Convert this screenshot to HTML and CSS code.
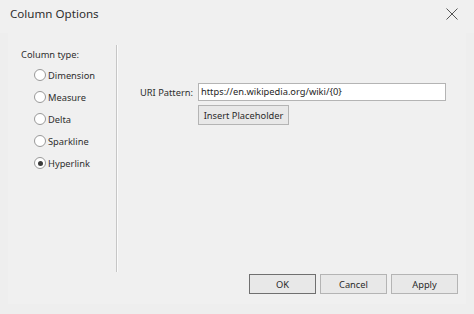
FILE: index.html
```html
<!DOCTYPE html>
<html>
<head>
<meta charset="utf-8">
<link rel="stylesheet" href="styles.css">
</head>
<body>
<div class="dialog">
  <div class="titlebar">
    <span class="title">Column Options</span>
    <svg class="close" width="12" height="12" viewBox="0 0 12 12"><path d="M0.5 0.5 L11.5 11.5 M11.5 0.5 L0.5 11.5" stroke="#555" stroke-width="1" fill="none"/></svg>
  </div>
  <div class="panel">
    <div class="main">
      <div class="types">
        <div class="types-label">Column type:</div>
        <div class="radio"><span class="dot"></span><span>Dimension</span></div>
        <div class="radio"><span class="dot"></span><span>Measure</span></div>
        <div class="radio"><span class="dot"></span><span>Delta</span></div>
        <div class="radio"><span class="dot"></span><span>Sparkline</span></div>
        <div class="radio"><span class="dot checked"></span><span>Hyperlink</span></div>
      </div>
      <div class="sep"></div>
      <div class="options">
        <div class="field">
          <span class="field-label">URI Pattern:</span>
          <div class="input">https://en.wikipedia.org/wiki/{0}</div>
        </div>
        <div class="btn insert">Insert Placeholder</div>
      </div>
    </div>
    <div class="footer">
      <div class="btn dlg default">OK</div>
      <div class="btn dlg">Cancel</div>
      <div class="btn dlg">Apply</div>
    </div>
  </div>
</div>
</body>
</html>
```
FILE: styles.css
```css
* { box-sizing: border-box; }
html, body { margin: 0; padding: 0; }
body {
  width: 474px;
  height: 314px;
  background: #eeeeee;
  font-family: "Noto Sans", sans-serif;
  font-size: 9.3px;
  color: #2e2e2e;
  overflow: hidden;
  white-space: nowrap;
}
.dialog { display: flex; flex-direction: column; height: 314px; }
.titlebar {
  height: 33px;
  display: flex;
  align-items: center;
  justify-content: space-between;
  padding: 0 16px 6px 10px;
  background: #f0f0f0;
}
.title { font-size: 11.6px; color: #2e2e2e; }
.close { display: block; margin-top: 1px; }
.panel {
  margin: 0 8px;
  height: 271px;
  background: #f0f0f0;
  display: flex;
  flex-direction: column;
}
.main { display: flex; margin-top: 12px; height: 227px; }
.types { width: 108px; padding-left: 13px; padding-top: 2px; }
.types-label { height: 17px; line-height: 16px; }
.radio { height: 22px; display: flex; align-items: center; }
.dot {
  width: 12px; height: 12px;
  border: 1px solid #999;
  border-radius: 50%;
  background: #fff;
  margin-left: 13px;
  margin-right: 2px;
  position: relative;
  flex: none;
}
.dot.checked::after {
  content: "";
  position: absolute;
  left: 2.5px; top: 2.5px;
  width: 5px; height: 5px;
  border-radius: 50%;
  background: #3a3a3a;
}
.sep { width: 2px; border-left: 1px solid #c6c6c6; border-right: 1px solid #fbfbfb; }
.options { padding-left: 22px; padding-top: 38px; }
.field { display: flex; align-items: center; height: 18px; }
.field-label { width: 58px; }
.input {
  width: 248px; height: 18px;
  border: 1px solid #b4b4b4;
  background: #fff;
  padding-left: 2px;
  line-height: 16px;
  color: #1e1e1e;
}
.btn {
  border: 1px solid #b4b4b4;
  background: #e8e8e8;
  display: flex; align-items: center; justify-content: center;
  color: #2a2a2a;
}
.insert { width: 91px; height: 20px; margin-left: 58px; margin-top: 4px; }
.footer { display: flex; justify-content: flex-end; gap: 4px; padding-right: 8px; margin-top: 2px; }
.dlg { width: 67px; height: 20px; }
.default { border-color: #707070; }
```
